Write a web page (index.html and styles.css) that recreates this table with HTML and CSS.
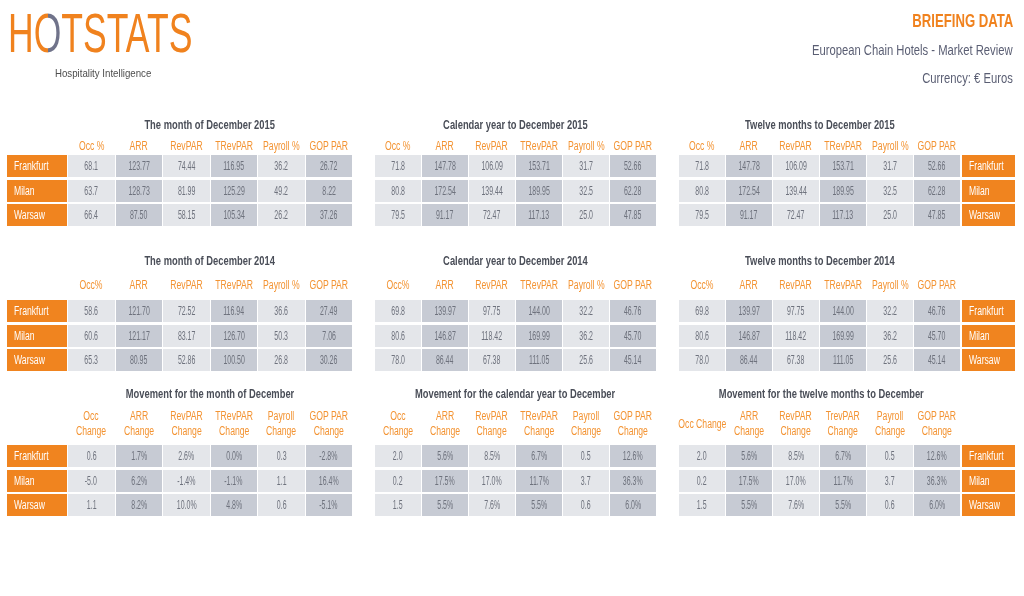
FILE: index.html
```html
<!DOCTYPE html>
<html lang="en">
<head>
<meta charset="utf-8">
<title>Briefing Data</title>
<link rel="stylesheet" href="styles.css">
</head>
<body>
<header class="top">
  <div class="logo">
    <div><span class="s word">H<span class="o">O</span>TSTATS</span></div>
    <div class="tag"><span class="s">Hospitality Intelligence</span></div>
  </div>
  <div class="brief">
    <div class="h1"><span class="s">BRIEFING DATA</span></div>
    <div class="sub"><span class="s">European Chain Hotels - Market Review</span></div>
    <div class="sub cur"><span class="s">Currency: € Euros</span></div>
  </div>
</header>

<section class="block b1">
  <div class="tbl t1">
    <div class="ttl"><span class="s">The month of December 2015</span></div>
    <div class="hdr"><div><span class="s">Occ %</span></div><div><span class="s">ARR</span></div><div><span class="s">RevPAR</span></div><div><span class="s">TRevPAR</span></div><div><span class="s">Payroll %</span></div><div><span class="s">GOP PAR</span></div></div>
    <div class="body">
      <div class="lab"><span class="s">Frankfurt</span></div><div class="c l"><span class="s">68.1</span></div><div class="c d"><span class="s">123.77</span></div><div class="c l"><span class="s">74.44</span></div><div class="c d"><span class="s">116.95</span></div><div class="c l"><span class="s">36.2</span></div><div class="c d"><span class="s">26.72</span></div>
      <div class="lab"><span class="s">Milan</span></div><div class="c l"><span class="s">63.7</span></div><div class="c d"><span class="s">128.73</span></div><div class="c l"><span class="s">81.99</span></div><div class="c d"><span class="s">125.29</span></div><div class="c l"><span class="s">49.2</span></div><div class="c d"><span class="s">8.22</span></div>
      <div class="lab"><span class="s">Warsaw</span></div><div class="c l"><span class="s">66.4</span></div><div class="c d"><span class="s">87.50</span></div><div class="c l"><span class="s">58.15</span></div><div class="c d"><span class="s">105.34</span></div><div class="c l"><span class="s">26.2</span></div><div class="c d"><span class="s">37.26</span></div>
    </div>
  </div>
  <div class="tbl t2">
    <div class="ttl"><span class="s">Calendar year to December 2015</span></div>
    <div class="hdr"><div><span class="s">Occ %</span></div><div><span class="s">ARR</span></div><div><span class="s">RevPAR</span></div><div><span class="s">TRevPAR</span></div><div><span class="s">Payroll %</span></div><div><span class="s">GOP PAR</span></div></div>
    <div class="body">
      <div class="c l"><span class="s">71.8</span></div><div class="c d"><span class="s">147.78</span></div><div class="c l"><span class="s">106.09</span></div><div class="c d"><span class="s">153.71</span></div><div class="c l"><span class="s">31.7</span></div><div class="c d"><span class="s">52.66</span></div>
      <div class="c l"><span class="s">80.8</span></div><div class="c d"><span class="s">172.54</span></div><div class="c l"><span class="s">139.44</span></div><div class="c d"><span class="s">189.95</span></div><div class="c l"><span class="s">32.5</span></div><div class="c d"><span class="s">62.28</span></div>
      <div class="c l"><span class="s">79.5</span></div><div class="c d"><span class="s">91.17</span></div><div class="c l"><span class="s">72.47</span></div><div class="c d"><span class="s">117.13</span></div><div class="c l"><span class="s">25.0</span></div><div class="c d"><span class="s">47.85</span></div>
    </div>
  </div>
  <div class="tbl t3">
    <div class="ttl"><span class="s">Twelve months to December 2015</span></div>
    <div class="hdr"><div><span class="s">Occ %</span></div><div><span class="s">ARR</span></div><div><span class="s">RevPAR</span></div><div><span class="s">TRevPAR</span></div><div><span class="s">Payroll %</span></div><div><span class="s">GOP PAR</span></div></div>
    <div class="body">
      <div class="c l"><span class="s">71.8</span></div><div class="c d"><span class="s">147.78</span></div><div class="c l"><span class="s">106.09</span></div><div class="c d"><span class="s">153.71</span></div><div class="c l"><span class="s">31.7</span></div><div class="c d"><span class="s">52.66</span></div><div class="lab"><span class="s">Frankfurt</span></div>
      <div class="c l"><span class="s">80.8</span></div><div class="c d"><span class="s">172.54</span></div><div class="c l"><span class="s">139.44</span></div><div class="c d"><span class="s">189.95</span></div><div class="c l"><span class="s">32.5</span></div><div class="c d"><span class="s">62.28</span></div><div class="lab"><span class="s">Milan</span></div>
      <div class="c l"><span class="s">79.5</span></div><div class="c d"><span class="s">91.17</span></div><div class="c l"><span class="s">72.47</span></div><div class="c d"><span class="s">117.13</span></div><div class="c l"><span class="s">25.0</span></div><div class="c d"><span class="s">47.85</span></div><div class="lab"><span class="s">Warsaw</span></div>
    </div>
  </div>
</section>

<section class="block b2">
  <div class="tbl t1">
    <div class="ttl"><span class="s">The month of December 2014</span></div>
    <div class="hdr"><div><span class="s">Occ%</span></div><div><span class="s">ARR</span></div><div><span class="s">RevPAR</span></div><div><span class="s">TRevPAR</span></div><div><span class="s">Payroll %</span></div><div><span class="s">GOP PAR</span></div></div>
    <div class="body">
      <div class="lab"><span class="s">Frankfurt</span></div><div class="c l"><span class="s">58.6</span></div><div class="c d"><span class="s">121.70</span></div><div class="c l"><span class="s">72.52</span></div><div class="c d"><span class="s">116.94</span></div><div class="c l"><span class="s">36.6</span></div><div class="c d"><span class="s">27.49</span></div>
      <div class="lab"><span class="s">Milan</span></div><div class="c l"><span class="s">60.6</span></div><div class="c d"><span class="s">121.17</span></div><div class="c l"><span class="s">83.17</span></div><div class="c d"><span class="s">126.70</span></div><div class="c l"><span class="s">50.3</span></div><div class="c d"><span class="s">7.06</span></div>
      <div class="lab"><span class="s">Warsaw</span></div><div class="c l"><span class="s">65.3</span></div><div class="c d"><span class="s">80.95</span></div><div class="c l"><span class="s">52.86</span></div><div class="c d"><span class="s">100.50</span></div><div class="c l"><span class="s">26.8</span></div><div class="c d"><span class="s">30.26</span></div>
    </div>
  </div>
  <div class="tbl t2">
    <div class="ttl"><span class="s">Calendar year to December 2014</span></div>
    <div class="hdr"><div><span class="s">Occ%</span></div><div><span class="s">ARR</span></div><div><span class="s">RevPAR</span></div><div><span class="s">TRevPAR</span></div><div><span class="s">Payroll %</span></div><div><span class="s">GOP PAR</span></div></div>
    <div class="body">
      <div class="c l"><span class="s">69.8</span></div><div class="c d"><span class="s">139.97</span></div><div class="c l"><span class="s">97.75</span></div><div class="c d"><span class="s">144.00</span></div><div class="c l"><span class="s">32.2</span></div><div class="c d"><span class="s">46.76</span></div>
      <div class="c l"><span class="s">80.6</span></div><div class="c d"><span class="s">146.87</span></div><div class="c l"><span class="s">118.42</span></div><div class="c d"><span class="s">169.99</span></div><div class="c l"><span class="s">36.2</span></div><div class="c d"><span class="s">45.70</span></div>
      <div class="c l"><span class="s">78.0</span></div><div class="c d"><span class="s">86.44</span></div><div class="c l"><span class="s">67.38</span></div><div class="c d"><span class="s">111.05</span></div><div class="c l"><span class="s">25.6</span></div><div class="c d"><span class="s">45.14</span></div>
    </div>
  </div>
  <div class="tbl t3">
    <div class="ttl"><span class="s">Twelve months to December 2014</span></div>
    <div class="hdr"><div><span class="s">Occ%</span></div><div><span class="s">ARR</span></div><div><span class="s">RevPAR</span></div><div><span class="s">TRevPAR</span></div><div><span class="s">Payroll %</span></div><div><span class="s">GOP PAR</span></div></div>
    <div class="body">
      <div class="c l"><span class="s">69.8</span></div><div class="c d"><span class="s">139.97</span></div><div class="c l"><span class="s">97.75</span></div><div class="c d"><span class="s">144.00</span></div><div class="c l"><span class="s">32.2</span></div><div class="c d"><span class="s">46.76</span></div><div class="lab"><span class="s">Frankfurt</span></div>
      <div class="c l"><span class="s">80.6</span></div><div class="c d"><span class="s">146.87</span></div><div class="c l"><span class="s">118.42</span></div><div class="c d"><span class="s">169.99</span></div><div class="c l"><span class="s">36.2</span></div><div class="c d"><span class="s">45.70</span></div><div class="lab"><span class="s">Milan</span></div>
      <div class="c l"><span class="s">78.0</span></div><div class="c d"><span class="s">86.44</span></div><div class="c l"><span class="s">67.38</span></div><div class="c d"><span class="s">111.05</span></div><div class="c l"><span class="s">25.6</span></div><div class="c d"><span class="s">45.14</span></div><div class="lab"><span class="s">Warsaw</span></div>
    </div>
  </div>
</section>

<section class="block b3">
  <div class="tbl t1">
    <div class="ttl"><span class="s">Movement for the month of December</span></div>
    <div class="hdr"><div><span class="s">Occ<br>Change</span></div><div><span class="s">ARR<br>Change</span></div><div><span class="s">RevPAR<br>Change</span></div><div><span class="s">TRevPAR<br>Change</span></div><div><span class="s">Payroll<br>Change</span></div><div><span class="s">GOP PAR<br>Change</span></div></div>
    <div class="body">
      <div class="lab"><span class="s">Frankfurt</span></div><div class="c l"><span class="s">0.6</span></div><div class="c d"><span class="s">1.7%</span></div><div class="c l"><span class="s">2.6%</span></div><div class="c d"><span class="s">0.0%</span></div><div class="c l"><span class="s">0.3</span></div><div class="c d"><span class="s">-2.8%</span></div>
      <div class="lab"><span class="s">Milan</span></div><div class="c l"><span class="s">-5.0</span></div><div class="c d"><span class="s">6.2%</span></div><div class="c l"><span class="s">-1.4%</span></div><div class="c d"><span class="s">-1.1%</span></div><div class="c l"><span class="s">1.1</span></div><div class="c d"><span class="s">16.4%</span></div>
      <div class="lab"><span class="s">Warsaw</span></div><div class="c l"><span class="s">1.1</span></div><div class="c d"><span class="s">8.2%</span></div><div class="c l"><span class="s">10.0%</span></div><div class="c d"><span class="s">4.8%</span></div><div class="c l"><span class="s">0.6</span></div><div class="c d"><span class="s">-5.1%</span></div>
    </div>
  </div>
  <div class="tbl t2">
    <div class="ttl"><span class="s">Movement for the calendar year to December</span></div>
    <div class="hdr"><div><span class="s">Occ<br>Change</span></div><div><span class="s">ARR<br>Change</span></div><div><span class="s">RevPAR<br>Change</span></div><div><span class="s">TRevPAR<br>Change</span></div><div><span class="s">Payroll<br>Change</span></div><div><span class="s">GOP PAR<br>Change</span></div></div>
    <div class="body">
      <div class="c l"><span class="s">2.0</span></div><div class="c d"><span class="s">5.6%</span></div><div class="c l"><span class="s">8.5%</span></div><div class="c d"><span class="s">6.7%</span></div><div class="c l"><span class="s">0.5</span></div><div class="c d"><span class="s">12.6%</span></div>
      <div class="c l"><span class="s">0.2</span></div><div class="c d"><span class="s">17.5%</span></div><div class="c l"><span class="s">17.0%</span></div><div class="c d"><span class="s">11.7%</span></div><div class="c l"><span class="s">3.7</span></div><div class="c d"><span class="s">36.3%</span></div>
      <div class="c l"><span class="s">1.5</span></div><div class="c d"><span class="s">5.5%</span></div><div class="c l"><span class="s">7.6%</span></div><div class="c d"><span class="s">5.5%</span></div><div class="c l"><span class="s">0.6</span></div><div class="c d"><span class="s">6.0%</span></div>
    </div>
  </div>
  <div class="tbl t3">
    <div class="ttl"><span class="s">Movement for the twelve months to December</span></div>
    <div class="hdr"><div><span class="s">Occ Change</span></div><div><span class="s">ARR<br>Change</span></div><div><span class="s">RevPAR<br>Change</span></div><div><span class="s">TrevPAR<br>Change</span></div><div><span class="s">Payroll<br>Change</span></div><div><span class="s">GOP PAR<br>Change</span></div></div>
    <div class="body">
      <div class="c l"><span class="s">2.0</span></div><div class="c d"><span class="s">5.6%</span></div><div class="c l"><span class="s">8.5%</span></div><div class="c d"><span class="s">6.7%</span></div><div class="c l"><span class="s">0.5</span></div><div class="c d"><span class="s">12.6%</span></div><div class="lab"><span class="s">Frankfurt</span></div>
      <div class="c l"><span class="s">0.2</span></div><div class="c d"><span class="s">17.5%</span></div><div class="c l"><span class="s">17.0%</span></div><div class="c d"><span class="s">11.7%</span></div><div class="c l"><span class="s">3.7</span></div><div class="c d"><span class="s">36.3%</span></div><div class="lab"><span class="s">Milan</span></div>
      <div class="c l"><span class="s">1.5</span></div><div class="c d"><span class="s">5.5%</span></div><div class="c l"><span class="s">7.6%</span></div><div class="c d"><span class="s">5.5%</span></div><div class="c l"><span class="s">0.6</span></div><div class="c d"><span class="s">6.0%</span></div><div class="lab"><span class="s">Warsaw</span></div>
    </div>
  </div>
</section>
</body>
</html>
```

FILE: styles.css
```css
* { box-sizing: border-box; margin: 0; padding: 0; }

body {
  width: 1024px;
  height: 596px;
  overflow: hidden;
  background: #ffffff;
  font-family: "Liberation Sans", Arial, sans-serif;
}

.s {
  display: inline-block;
  white-space: nowrap;
  transform: scaleX(var(--sx, 1));
}

/* ---------- header ---------- */
.top {
  height: 118px;
  display: flex;
  justify-content: space-between;
}

.logo { padding: 5px 0 0 8px; }

.word {
  font-size: 56px;
  line-height: 56px;
  color: #f0821e;
  --sx: 0.635;
  transform-origin: left center;
}

.word .o {
  background: linear-gradient(90deg, #f0821e 0 54%, #70738a 54% 100%);
  -webkit-background-clip: text;
  background-clip: text;
  color: transparent;
}

.tag {
  margin: 5px 0 0 47px;
  font-size: 11px;
  line-height: 14px;
  color: #4d4d4d;
}
.tag .s { --sx: 0.88; transform-origin: left center; }

.brief {
  padding: 10px 11px 0 0;
  text-align: right;
}
.brief .s { transform-origin: right center; }

.h1 {
  font-size: 18px;
  line-height: 22px;
  font-weight: bold;
  color: #f0821e;
}
.h1 .s { --sx: 0.73; }

.sub {
  margin-top: 9px;
  font-size: 15px;
  line-height: 18px;
  color: #5a5e73;
}
.sub .s { --sx: 0.75; }
.sub.cur { margin-top: 10px; }

/* ---------- blocks ---------- */
.block {
  display: grid;
  grid-template-columns: 345px 281px 336px;
  column-gap: 23px;
  padding-left: 7px;
}
.b2 { margin-top: 28px; }
.b3 { margin-top: 16px; }

.tbl { display: flex; flex-direction: column; }

.ttl {
  height: 14px;
  line-height: 14px;
  text-align: center;
  font-size: 13px;
  font-weight: bold;
  color: #4a4e58;
}
.ttl .s { --sx: 0.72; }

.hdr {
  display: grid;
  grid-template-columns: repeat(6, 46px);
  column-gap: 1px;
  font-size: 12px;
  line-height: 14px;
  color: #f39332;
}
.hdr > div {
  display: flex;
  align-items: center;
  justify-content: center;
  text-align: center;
}
.hdr .s { --sx: 0.72; }

.b1 .ttl { margin-bottom: 7px; }
.b2 .ttl { margin-bottom: 10px; }
.b3 .ttl { margin-bottom: 8px; }
.b1 .hdr { margin-bottom: 2px; }
.b2 .hdr { margin-bottom: 8px; }
.b3 .hdr { margin-bottom: 6px; line-height: 15px; height: 30px; }

.t1 .ttl, .t1 .hdr { margin-left: 61px; }
.t1 .hdr { grid-template-columns: repeat(6, 46.5px); }
.t3 .ttl, .t3 .hdr { width: 281px; }

.body {
  display: grid;
  column-gap: 1px;
  row-gap: 2.5px;
  grid-auto-rows: 22px;
}
.t1 .body { grid-template-columns: 60px repeat(6, 46.5px); }
.t2 .body { grid-template-columns: repeat(6, 46px); }
.t3 .body { grid-template-columns: repeat(6, 46px) 54px; }

.c {
  display: flex;
  align-items: center;
  justify-content: center;
  font-size: 12.5px;
  color: #6e727d;
}
.c .s { --sx: 0.56; }
.l { background: #e4e6ea; }
.d { background: #c7cbd4; }

.lab {
  display: flex;
  align-items: center;
  padding-left: 7px;
  background: #f0841f;
  color: #ffffff;
  font-size: 12px;
}
.lab .s { --sx: 0.72; transform-origin: left center; }
.t3 .lab { margin-left: 1px; }
```
